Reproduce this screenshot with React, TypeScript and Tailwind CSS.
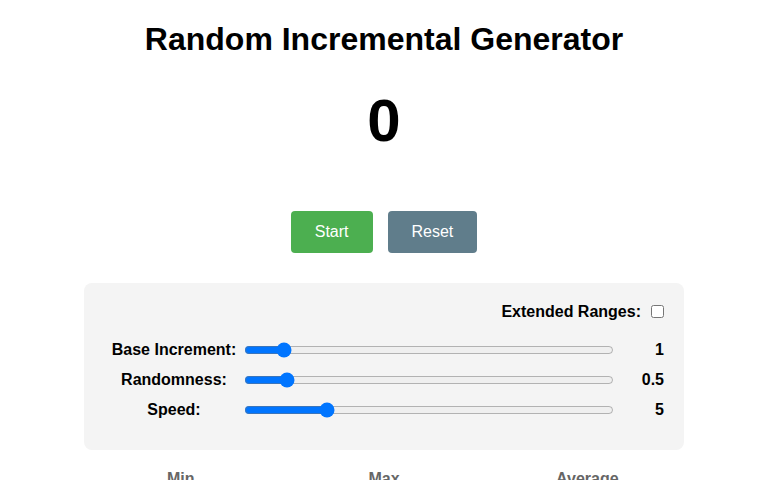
import React, { useState } from "react";

type SliderRowProps = {
  label: string;
  min: number;
  max: number;
  step: number;
  value: number;
  onChange: (v: number) => void;
};

function SliderRow({ label, min, max, step, value, onChange }: SliderRowProps) {
  return (
    <div className="flex items-center h-5 mb-[10px]">
      <label className="w-[140px] shrink-0 text-center font-bold">{label}</label>
      <input
        type="range"
        min={min}
        max={max}
        step={step}
        value={value}
        onChange={(e) => onChange(parseFloat(e.target.value))}
        className="flex-1 min-w-0 mx-0"
      />
      <span className="w-[50px] shrink-0 text-right font-bold">{value}</span>
    </div>
  );
}

export default function App() {
  const [count, setCount] = useState(0);
  const [extended, setExtended] = useState(false);
  const [base, setBase] = useState(1);
  const [randomness, setRandomness] = useState(0.5);
  const [speed, setSpeed] = useState(5);

  return (
    <div className="min-h-screen bg-white text-black font-['Liberation_Sans',Arial,sans-serif] px-5 pt-[21px]">
      <h1 className="text-[32px] leading-[36.8px] font-bold text-center">Random Incremental Generator</h1>

      <div className="mt-[28px] text-[60px] leading-[69px] font-bold text-center">{count}</div>

      <div className="mt-[56px] flex justify-center gap-[15px]">
        <button className="bg-[#4caf50] text-white text-base px-6 py-3 rounded leading-[18px]">Start</button>
        <button
          onClick={() => setCount(0)}
          className="bg-[#607d8b] text-white text-base px-6 py-3 rounded leading-[18px]"
        >
          Reset
        </button>
      </div>

      <div className="mt-[30px] mx-auto w-[600px] bg-[#f4f4f4] rounded-lg px-5 pt-5 pb-5">
        <div className="flex items-center justify-end h-[18px] mb-[19px]">
          <label className="font-bold">Extended Ranges:</label>
          <input
            type="checkbox"
            checked={extended}
            onChange={(e) => setExtended(e.target.checked)}
            className="ml-[10px] w-[13px] h-[13px] m-0"
          />
        </div>
        <SliderRow label="Base Increment:" min={0.1} max={10} step={0.1} value={base} onChange={setBase} />
        <SliderRow label="Randomness:" min={0} max={5} step={0.1} value={randomness} onChange={setRandomness} />
        <SliderRow label="Speed:" min={1} max={20} step={1} value={speed} onChange={setSpeed} />
      </div>

      <div className="mt-[17px] mx-auto w-[600px] grid grid-cols-3 gap-[10px] text-center text-[#666]">
        <div>
          <div className="font-bold">Min</div>
          <div className="text-xl">0</div>
        </div>
        <div>
          <div className="font-bold">Max</div>
          <div className="text-xl">0</div>
        </div>
        <div>
          <div className="font-bold">Average</div>
          <div className="text-xl">0</div>
        </div>
      </div>
    </div>
  );
}
